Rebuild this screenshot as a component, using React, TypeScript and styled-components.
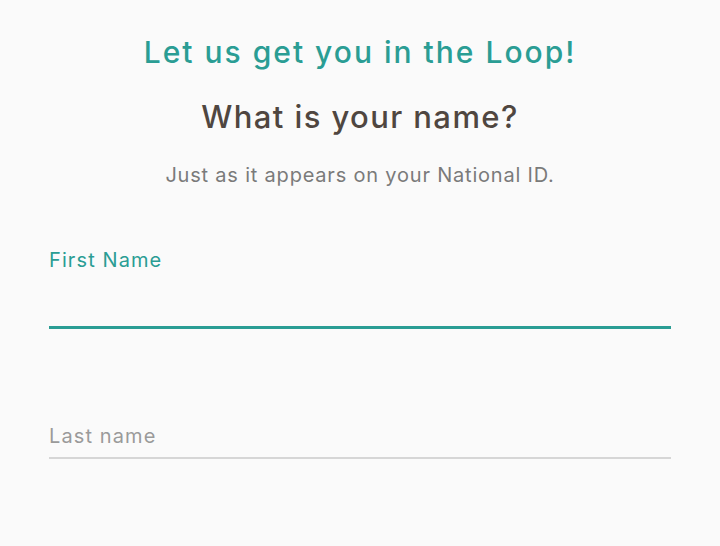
import React from 'react'
import styled, { createGlobalStyle } from 'styled-components'

const TEAL = '#2a9d94'
const FONT = 'Inter, "DejaVu Sans", sans-serif'

const GlobalStyle = createGlobalStyle`
  html, body {
    margin: 0;
    padding: 0;
    background: #fafafa;
    font-family: ${FONT};
  }
`

const Page = styled.main`
  width: 720px;
  height: 546px;
  box-sizing: border-box;
  padding: 32px 49px 0 49px;
  display: flex;
  flex-direction: column;
`

const Title = styled.h1`
  margin: 0;
  text-align: center;
  color: ${TEAL};
  font-size: 30px;
  font-weight: 500;
  letter-spacing: 2px;
  line-height: 40px;
`

const Heading = styled.h2`
  margin: 25px 0 0;
  text-align: center;
  color: #4f4640;
  font-size: 31px;
  font-weight: 500;
  letter-spacing: 1.4px;
  line-height: 40px;
`

const Subtitle = styled.p`
  margin: 26px 0 0;
  text-align: center;
  color: #7a7a7a;
  font-size: 20px;
  letter-spacing: 0.8px;
  line-height: 24px;
`

const Field = styled.label<{ active?: boolean }>`
  display: flex;
  flex-direction: column;
  margin-top: ${({ active }) => (active ? '61px' : '95px')};
`

const Label = styled.span<{ active?: boolean }>`
  color: ${({ active }) => (active ? TEAL : '#9a9a9a')};
  font-size: 20px;
  letter-spacing: 1.1px;
  line-height: 24px;
`

const Input = styled.input<{ active?: boolean }>`
  border: 0;
  outline: 0;
  background: transparent;
  font-family: ${FONT};
  font-size: 18px;
  padding: 0;
  height: ${({ active }) => (active ? '54px' : '9px')};
  border-bottom: ${({ active }) => (active ? `3px solid ${TEAL}` : '2px solid #d6d6d6')};
`

export default function App() {
  return (
    <>
      <GlobalStyle />
      <Page>
        <Title>Let us get you in the Loop!</Title>
        <Heading>What is your name?</Heading>
        <Subtitle>Just as it appears on your National ID.</Subtitle>
        <Field active>
          <Label active>First Name</Label>
          <Input active />
        </Field>
        <Field>
          <Label>Last name</Label>
          <Input />
        </Field>
      </Page>
    </>
  )
}
